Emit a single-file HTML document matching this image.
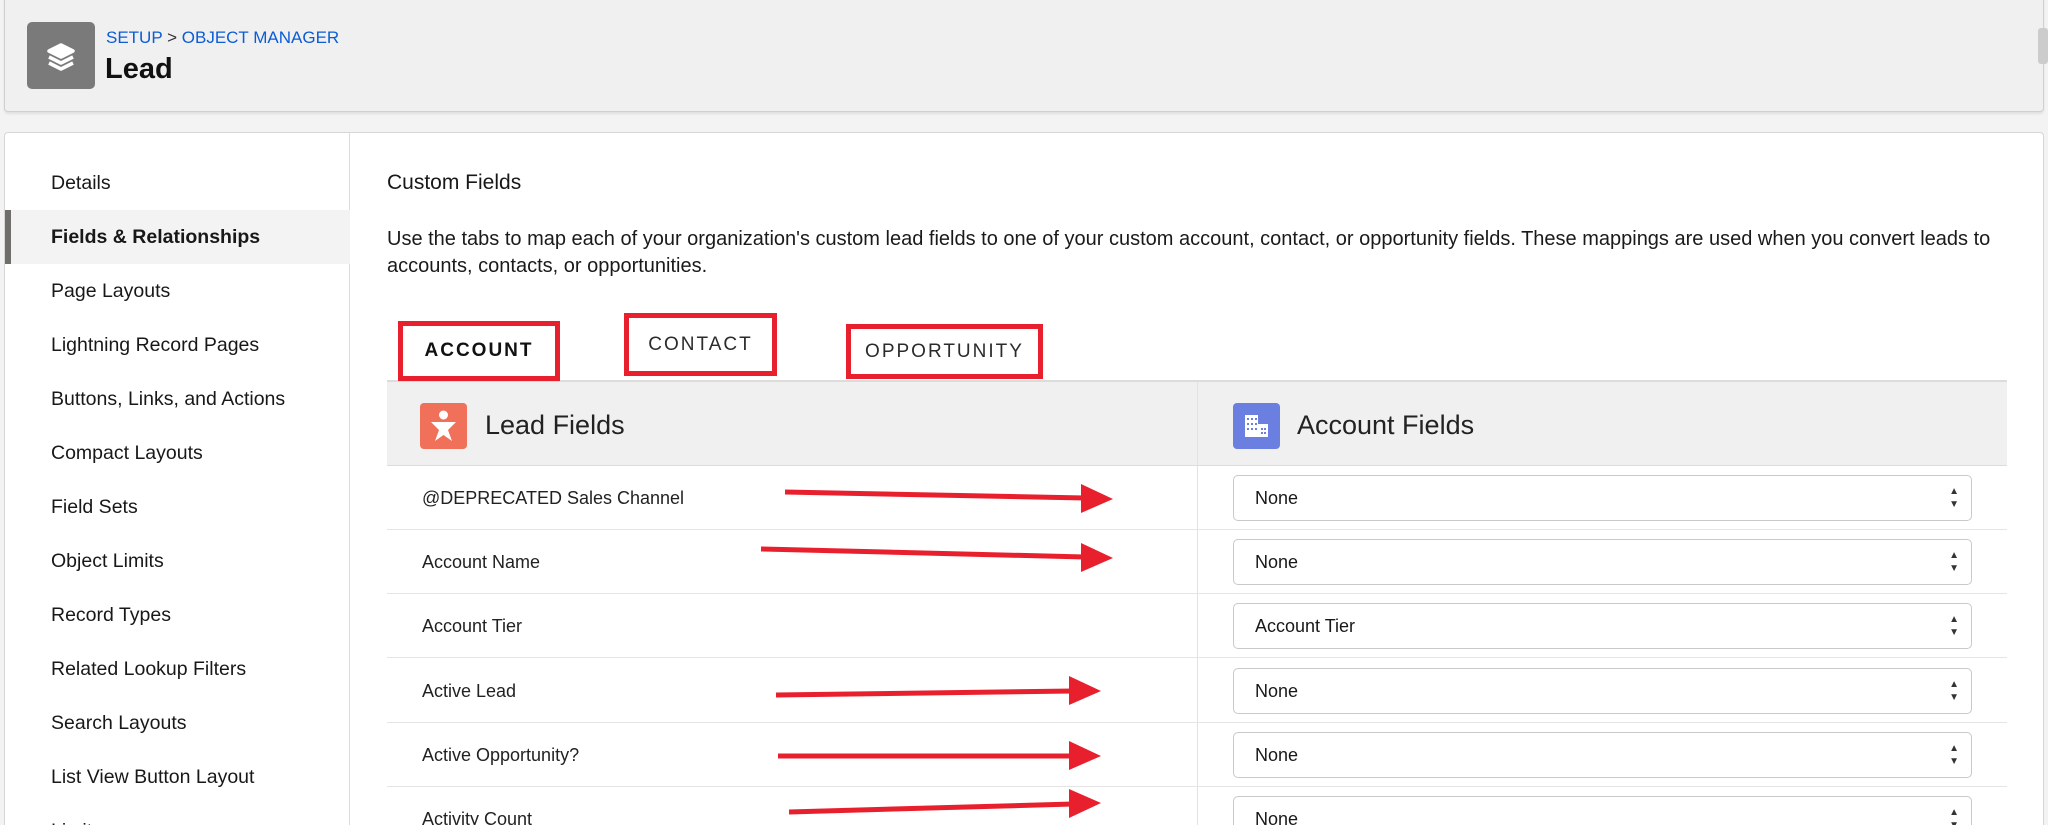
<!DOCTYPE html>
<html><head><meta charset="utf-8"><style>
*{margin:0;padding:0;box-sizing:border-box}
html,body{width:2048px;height:825px;overflow:hidden}
body{background:#f3f3f3;font-family:"Liberation Sans",sans-serif;position:relative;color:#181818}
.a{position:absolute}
.hdr{left:4px;top:-2px;width:2040px;height:114px;background:#f0f0f0;border:1px solid #d0d0d0;border-radius:0 0 4px 4px;box-shadow:0 2px 2px rgba(0,0,0,.08)}
.panel{left:4px;top:132px;width:2040px;height:700px;background:#fff;border:1px solid #d6d6d6;border-radius:4px}
.side{left:5px;top:133px;width:345px;height:692px;border-right:1px solid #dcdcdc}
.si{position:absolute;left:46px;font-size:19.5px;color:#181818}
.sel{left:5px;top:210px;width:345px;height:54px;background:#f3f3f3;border-left:6px solid #706e6b}
.tab{border:5px solid #e8202e;font-size:19px;letter-spacing:2px;display:flex;align-items:center;justify-content:center;color:#2b2b2b}
.row{position:absolute;left:387px;width:1620px;height:64px;border-bottom:1px solid #e5e5e5}
.row .l{position:absolute;left:35px;top:22px;font-size:18px;color:#222}
.row .s{position:absolute;left:846px;top:9px;width:739px;height:46px;border:1px solid #c9c9c9;border-radius:5px;background:#fff}
.row .s span{position:absolute;left:21px;top:12px;font-size:18px}
.row .s i{position:absolute;right:12px;top:9px;font-style:normal;font-size:10px;line-height:13px;color:#333}
</style></head><body>
<div class="a hdr"></div>
<div class="a" style="left:27px;top:22px;width:68px;height:67px;background:#7a7a7a;border-radius:5px">
<svg width="68" height="67" viewBox="0 0 68 67"><g fill="none" stroke="#fff" stroke-width="3.5" stroke-linejoin="round"><path d="M34 23 L46 29 L34 35 L22 29 Z" fill="#fff"/><path d="M22 35 L34 41 L46 35"/><path d="M22 41 L34 47 L46 41"/></g></svg></div>
<div class="a" style="left:106px;top:28px;font-size:17px;color:#0b5cd5">SETUP <span style="color:#333">&gt;</span> OBJECT MANAGER</div>
<div class="a" style="left:105px;top:53px;font-size:29px;font-weight:bold;color:#111">Lead</div>
<div class="a" style="left:2038px;top:28px;width:10px;height:36px;background:#ccc;border-radius:3px"></div>

<div class="a panel"></div>
<div class="a side"></div>
<div class="a sel"></div>
<div class="a" style="left:5px;top:0;width:345px;height:825px">
<div class="si" style="top:172px">Details</div>
<div class="si" style="top:226px;font-weight:bold">Fields &amp; Relationships</div>
<div class="si" style="top:280px">Page Layouts</div>
<div class="si" style="top:334px">Lightning Record Pages</div>
<div class="si" style="top:388px">Buttons, Links, and Actions</div>
<div class="si" style="top:442px">Compact Layouts</div>
<div class="si" style="top:496px">Field Sets</div>
<div class="si" style="top:550px">Object Limits</div>
<div class="si" style="top:604px">Record Types</div>
<div class="si" style="top:658px">Related Lookup Filters</div>
<div class="si" style="top:712px">Search Layouts</div>
<div class="si" style="top:766px">List View Button Layout</div>
<div class="si" style="top:820px">Limits</div>
</div>

<div class="a" style="left:387px;top:171px;font-size:21px">Custom Fields</div>
<div class="a" style="left:387px;top:226px;width:1620px;font-size:20px;line-height:27px;color:#1a1a1a">Use the tabs to map each of your organization's custom lead fields to one of your custom account, contact, or opportunity fields. These mappings are used when you convert leads to accounts, contacts, or opportunities.</div>

<div class="a" style="left:387px;top:380px;width:1620px;height:2px;background:#dcdcdc"></div>
<div class="a tab" style="left:398px;top:321px;width:162px;height:60px;font-weight:bold;color:#111">ACCOUNT</div>
<div class="a tab" style="left:624px;top:313px;width:153px;height:63px">CONTACT</div>
<div class="a tab" style="left:846px;top:324px;width:197px;height:55px">OPPORTUNITY</div>

<div class="a" style="left:387px;top:382px;width:1620px;height:84px;background:#f0f0f0;border-bottom:1px solid #dcdcdc"></div>
<div class="a" style="left:1197px;top:382px;width:1px;height:443px;background:#e2e2e2"></div>
<div class="a" style="left:420px;top:403px;width:47px;height:46px;background:#f0705a;border-radius:4px">
<svg width="47" height="46" viewBox="0 0 47 46"><circle cx="23.5" cy="12" r="4.5" fill="#fff"/><path d="M11 19 L36 19 L28 27 L32 38 L23.5 32 L15 38 L19 27 Z" fill="#fff"/></svg></div>
<div class="a" style="left:485px;top:410px;font-size:27px;color:#222">Lead Fields</div>
<div class="a" style="left:1233px;top:403px;width:47px;height:46px;background:#6b7fe0;border-radius:4px">
<svg width="47" height="46" viewBox="0 0 47 46"><rect x="12" y="12" width="13" height="22" fill="#fff"/><rect x="25" y="21" width="10" height="13" fill="#fff"/><g fill="#6b7fe0"><rect x="14" y="15" width="2" height="2"/><rect x="18" y="15" width="2" height="2"/><rect x="22" y="15" width="2" height="2"/><rect x="14" y="20" width="2" height="2"/><rect x="18" y="20" width="2" height="2"/><rect x="22" y="20" width="2" height="2"/><rect x="14" y="25" width="2" height="2"/><rect x="18" y="25" width="2" height="2"/><rect x="22" y="25" width="2" height="2"/><rect x="28" y="25" width="2" height="2"/><rect x="31" y="25" width="2" height="2"/><rect x="28" y="29" width="2" height="2"/><rect x="31" y="29" width="2" height="2"/></g></svg></div>
<div class="a" style="left:1297px;top:410px;font-size:27px;color:#222">Account Fields</div>

<div class="row" style="top:466px"><div class="l">@DEPRECATED Sales Channel</div><div class="s"><span>None</span><i>▲<br>▼</i></div></div>
<div class="row" style="top:530px"><div class="l">Account Name</div><div class="s"><span>None</span><i>▲<br>▼</i></div></div>
<div class="row" style="top:594px"><div class="l">Account Tier</div><div class="s"><span>Account Tier</span><i>▲<br>▼</i></div></div>
<div class="row" style="top:659px"><div class="l">Active Lead</div><div class="s"><span>None</span><i>▲<br>▼</i></div></div>
<div class="row" style="top:723px"><div class="l">Active Opportunity?</div><div class="s"><span>None</span><i>▲<br>▼</i></div></div>
<div class="row" style="top:787px"><div class="l">Activity Count</div><div class="s"><span>None</span><i>▲<br>▼</i></div></div>

<svg class="a" style="left:0;top:0" width="2048" height="825"><g stroke="#e8202e" stroke-width="5" fill="#e8202e">
<line x1="785" y1="492" x2="1085" y2="498"/><polygon points="1113,499 1081,484 1081,513" stroke="none"/>
<line x1="761" y1="549" x2="1085" y2="557"/><polygon points="1113,558 1081,543 1081,572" stroke="none"/>
<line x1="776" y1="695" x2="1073" y2="691"/><polygon points="1101,691 1069,676 1069,705" stroke="none"/>
<line x1="778" y1="756" x2="1073" y2="756"/><polygon points="1101,756 1069,741 1069,770" stroke="none"/>
<line x1="789" y1="812" x2="1073" y2="804"/><polygon points="1101,803 1069,789 1069,818" stroke="none"/>
</g></svg>
</body></html>
